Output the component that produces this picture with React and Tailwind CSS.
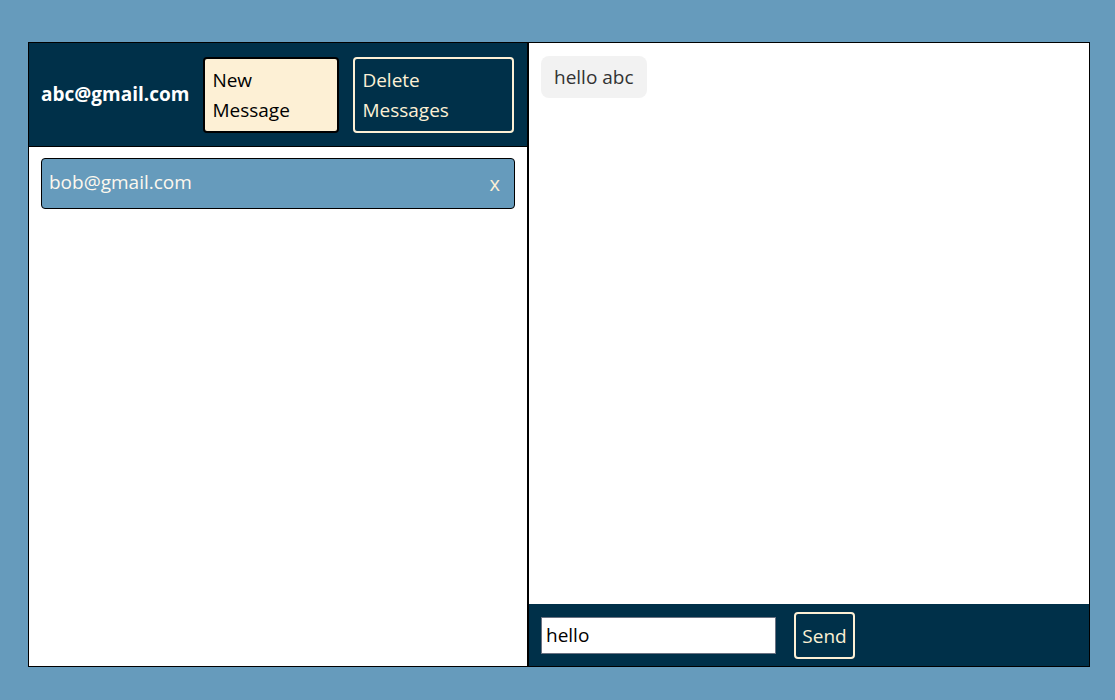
import React, { useState } from "react";

export default function App() {
  const [draft, setDraft] = useState("hello");

  return (
    <div
      className="w-[1115px] h-[700px] bg-[#669bbc] pt-[42px] pl-[28px]"
      style={{ fontFamily: '"Open Sans", "Noto Sans", sans-serif' }}
    >
      <div className="flex w-[1062px] h-[625px] border border-black bg-white text-[19px]">
        {/* left: account + conversations */}
        <div className="flex flex-col w-[500px] border-r-2 border-black">
          <div className="flex items-center h-[104px] bg-[#003049] border-b border-black pl-3 gap-[14px]">
            <div className="font-bold text-white">abc@gmail.com</div>
            <button className="w-[136px] h-[76px] text-left px-[7px] leading-[30px] bg-[#fdf0d5] text-black border-2 border-black rounded">
              New
              <br />
              Message
            </button>
            <button className="w-[161px] h-[76px] text-left px-[7px] leading-[30px] bg-[#003049] text-[#fdf0d5] border-2 border-[#fdf0d5] rounded">
              Delete
              <br />
              Messages
            </button>
          </div>
          <div className="flex-1 pt-[11px] px-3">
            <div className="flex items-center justify-between h-[51px] pl-[7px] pr-[14px] bg-[#669bbc] border border-black rounded text-[#fdf0d5]">
              <span className="-mt-[3px] text-[#fdf8ee]">bob@gmail.com</span>
              <span className="text-[20px]">x</span>
            </div>
          </div>
        </div>

        {/* right: messages */}
        <div className="flex flex-col flex-1">
          <div className="flex-1 px-3 pt-[13px]">
            <div className="inline-block px-[13px] py-[9px] leading-[24px] bg-[#f2f2f2] text-[#333] rounded-lg">
              hello abc
            </div>
          </div>
          <div className="flex items-center h-[62px] bg-[#003049] px-3 gap-[18px]">
            <input
              value={draft}
              onChange={(e) => setDraft(e.target.value)}
              className="w-[235px] h-[37px] bg-white text-black px-[4px] border border-gray-500 outline-none"
            />
            <button className="w-[61px] h-[47px] pt-[2px] border-2 border-[#fdf0d5] text-[#fdf0d5] rounded-sm">
              Send
            </button>
          </div>
        </div>
      </div>
    </div>
  );
}
